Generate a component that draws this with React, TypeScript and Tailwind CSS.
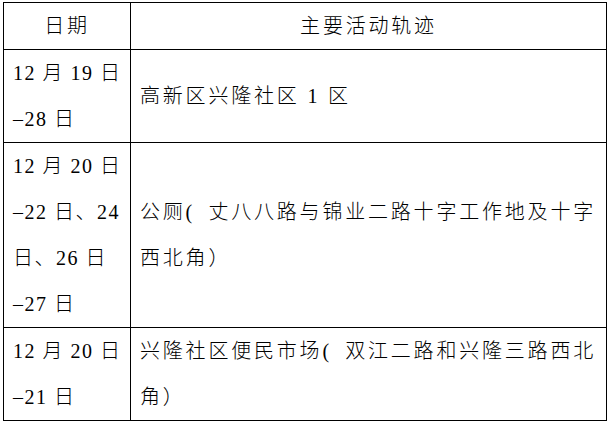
import React from "react";

const font = {
  fontFamily: '"Liberation Serif", "Noto Sans CJK SC", serif',
};

function LP() {
  return <span className="inline-block w-[22.8px] text-left">(</span>;
}

export default function App() {
  const cellL =
    "border border-black align-middle pl-[9px] pr-0 text-left whitespace-nowrap tracking-[1.5px]";
  const cellR = "border border-black align-middle pl-[9px] pr-0 text-left whitespace-nowrap";
  return (
    <div className="w-[609px] h-[422px] bg-white pt-[2px] pl-[3px]">
      <table
        className="border-collapse table-fixed w-[603px] text-[20px] leading-[46px] tracking-[2.8px] text-black font-light"
        style={font}
      >
        <colgroup>
          <col className="w-[127px]" />
          <col className="w-[476px]" />
        </colgroup>
        <tbody>
          <tr className="h-[47px]">
            <td className="border border-black text-center align-middle">日期</td>
            <td className="border border-black text-center align-middle">主要活动轨迹</td>
          </tr>
          <tr className="h-[93px]">
            <td className={cellL}>
              12 月 19 日<br />–28 日
            </td>
            <td className={cellR}>高新区兴隆社区 1 区</td>
          </tr>
          <tr className="h-[184px]">
            <td className={cellL}>
              12 月 20 日<br />–22 日、24<br />日、26 日<br />–27 日
            </td>
            <td className={cellR}>
              公厕<LP />丈八八路与锦业二路十字工作地及十字<br />西北角）
            </td>
          </tr>
          <tr className="h-[93px]">
            <td className={cellL}>
              12 月 20 日<br />–21 日
            </td>
            <td className={cellR}>
              兴隆社区便民市场<LP />双江二路和兴隆三路西北<br />角）
            </td>
          </tr>
        </tbody>
      </table>
    </div>
  );
}
